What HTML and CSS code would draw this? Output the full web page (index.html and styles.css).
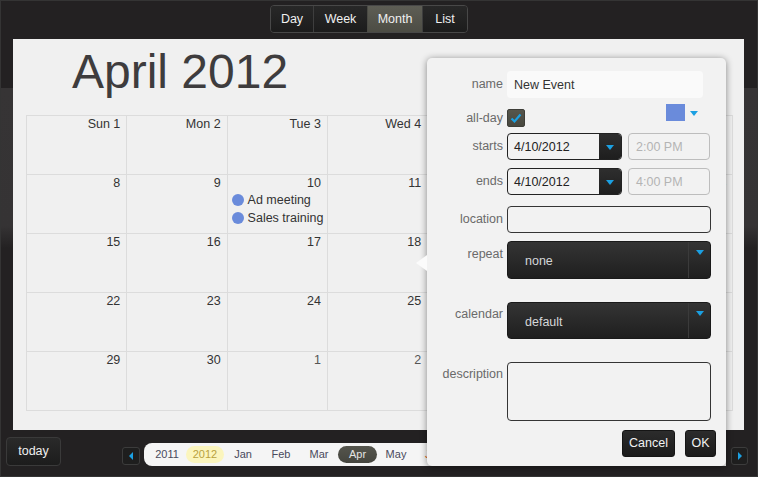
FILE: index.html
```html
<!DOCTYPE html>
<html>
<head>
<meta charset="utf-8">
<link rel="stylesheet" href="styles.css">
</head>
<body>
<div class="app">
  <div class="topbar">
    <div class="tabs">
      <div class="tab t-day">Day</div>
      <div class="tab t-week">Week</div>
      <div class="tab t-month active">Month</div>
      <div class="tab t-list">List</div>
    </div>
  </div>

  <div class="panel">
    <div class="title">April 2012</div>
    <div class="grid">
      <div class="cell"><div class="num">Sun 1</div></div>
      <div class="cell"><div class="num">Mon 2</div></div>
      <div class="cell"><div class="num">Tue 3</div></div>
      <div class="cell"><div class="num">Wed 4</div></div>
      <div class="cell"><div class="num">Thu 5</div></div>
      <div class="cell"><div class="num">Fri 6</div></div>
      <div class="cell"><div class="num">Sat 7</div></div>

      <div class="cell"><div class="num">8</div></div>
      <div class="cell"><div class="num">9</div></div>
      <div class="cell">
        <div class="num">10</div>
        <div class="event"><span class="dot"></span>Ad meeting</div>
        <div class="event"><span class="dot"></span>Sales training</div>
      </div>
      <div class="cell"><div class="num">11</div></div>
      <div class="cell"><div class="num">12</div></div>
      <div class="cell"><div class="num">13</div></div>
      <div class="cell"><div class="num">14</div></div>

      <div class="cell"><div class="num">15</div></div>
      <div class="cell"><div class="num">16</div></div>
      <div class="cell"><div class="num">17</div></div>
      <div class="cell"><div class="num">18</div></div>
      <div class="cell"><div class="num">19</div></div>
      <div class="cell"><div class="num">20</div></div>
      <div class="cell"><div class="num">21</div></div>

      <div class="cell"><div class="num">22</div></div>
      <div class="cell"><div class="num">23</div></div>
      <div class="cell"><div class="num">24</div></div>
      <div class="cell"><div class="num">25</div></div>
      <div class="cell"><div class="num">26</div></div>
      <div class="cell"><div class="num">27</div></div>
      <div class="cell"><div class="num">28</div></div>

      <div class="cell"><div class="num">29</div></div>
      <div class="cell"><div class="num">30</div></div>
      <div class="cell"><div class="num other">1</div></div>
      <div class="cell"><div class="num other">2</div></div>
      <div class="cell"><div class="num other">3</div></div>
      <div class="cell"><div class="num other">4</div></div>
      <div class="cell"><div class="num other">5</div></div>
    </div>
  </div>

  <div class="bottombar">
    <div class="today">today</div>
    <div class="navbtn prev">
      <svg width="6" height="8" viewBox="0 0 6 8"><polygon points="5,0 5,8 1,4" fill="#1ba0e2"/></svg>
    </div>
    <div class="strip">
      <div class="item">2011</div>
      <div class="item year-cur">2012</div>
      <div class="item">Jan</div>
      <div class="item">Feb</div>
      <div class="item">Mar</div>
      <div class="item month-cur">Apr</div>
      <div class="item">May</div>
      <div class="item jun">Jun</div>
    </div>
    <div class="navbtn next">
      <svg width="6" height="8" viewBox="0 0 6 8"><polygon points="1,0 1,8 5,4" fill="#1ba0e2"/></svg>
    </div>
  </div>

  <div class="popup">
    <div class="row r-name">
      <div class="lbl">name</div>
      <div class="field name-field">New Event</div>
    </div>
    <div class="row r-allday">
      <div class="lbl">all-day</div>
      <div class="check">
        <svg width="18" height="18" viewBox="0 0 18 18"><polyline points="4.5,9.5 7.5,12.5 13.5,5.5" fill="none" stroke="#1ba0e2" stroke-width="2.2"/></svg>
      </div>
      <div class="swatch"></div>
      <svg class="swatch-arrow" width="8" height="5" viewBox="0 0 8 5"><polygon points="0,0 8,0 4,5" fill="#1ba0e2"/></svg>
    </div>
    <div class="row r-starts">
      <div class="lbl">starts</div>
      <div class="datesel">
        <div class="dtext">4/10/2012</div>
        <div class="dbtn"><svg width="8" height="5" viewBox="0 0 8 5"><polygon points="0,0 8,0 4,5" fill="#1ba0e2"/></svg></div>
      </div>
      <div class="time">2:00 PM</div>
    </div>
    <div class="row r-ends">
      <div class="lbl">ends</div>
      <div class="datesel">
        <div class="dtext">4/10/2012</div>
        <div class="dbtn"><svg width="8" height="5" viewBox="0 0 8 5"><polygon points="0,0 8,0 4,5" fill="#1ba0e2"/></svg></div>
      </div>
      <div class="time">4:00 PM</div>
    </div>
    <div class="row r-loc">
      <div class="lbl">location</div>
      <div class="field box loc"></div>
    </div>
    <div class="row r-repeat">
      <div class="lbl">repeat</div>
      <div class="select">
        <div class="stext">none</div>
        <div class="sbtn"><svg width="8" height="5" viewBox="0 0 8 5"><polygon points="0,0 8,0 4,5" fill="#1ba0e2"/></svg></div>
      </div>
    </div>
    <div class="row r-cal">
      <div class="lbl">calendar</div>
      <div class="select">
        <div class="stext">default</div>
        <div class="sbtn"><svg width="8" height="5" viewBox="0 0 8 5"><polygon points="0,0 8,0 4,5" fill="#1ba0e2"/></svg></div>
      </div>
    </div>
    <div class="row r-desc">
      <div class="lbl">description</div>
      <div class="field box desc"></div>
    </div>
    <div class="row r-btns">
      <div class="btn cancel">Cancel</div>
      <div class="btn ok">OK</div>
    </div>
  </div>
</div>
</body>
</html>
```

FILE: styles.css
```css
html, body {
  margin: 0;
  padding: 0;
}
body {
  width: 758px;
  height: 477px;
  overflow: hidden;
  font-family: "Liberation Sans", Arial, sans-serif;
  font-size: 12.5px;
  background: linear-gradient(to bottom, #232122 0, #232122 88px, #363435 88px, #353334 226px, #232122 248px, #232122 100%);
}
.app {
  position: relative;
  width: 758px;
  height: 477px;
  box-shadow: inset 0 0 0 1px #343434;
  display: flex;
  flex-direction: column;
}

/* top bar */
.topbar {
  height: 39px;
  display: flex;
  align-items: flex-start;
}
.tabs {
  margin-top: 5px;
  margin-left: 270px;
  display: flex;
  border: 1px solid #484848;
  border-radius: 4px;
  overflow: hidden;
  height: 26px;
}
.tab {
  height: 26px;
  line-height: 27px;
  text-align: center;
  color: #f0f0f0;
  background: linear-gradient(to bottom, #282828, #1c1c1c);
  border-left: 1px solid #3e3e3e;
}
.tab.t-day { width: 42px; border-left: none; }
.tab.t-week { width: 53px; }
.tab.t-month { width: 54px; }
.tab.t-list { width: 44px; }
.tab.active {
  background: linear-gradient(to bottom, #5e5e55, #4c4c44);
  border-left-color: #4a4a44;
}

/* main panel */
.panel {
  height: 391px;
  margin: 0 14px 0 13px;
  background: #f0f0f0;
  box-sizing: border-box;
  padding: 9px 0 0 13px;
}
.title {
  margin-left: 46px;
  font-size: 48px;
  line-height: 48px;
  color: #3e3c3d;
}
.grid {
  margin-top: 19px;
  width: 707px;
  display: grid;
  grid-template-columns: 100.3px 100.3px 100.3px 100.3px 100.3px 100.3px 1fr;
  grid-auto-rows: 59px;
  border-top: 1px solid #dcdcdc;
  border-left: 1px solid #dcdcdc;
  box-sizing: border-box;
}
.cell {
  border-right: 1px solid #dcdcdc;
  border-bottom: 1px solid #dcdcdc;
  box-sizing: border-box;
  padding: 1px 0 0 0;
}
.num {
  text-align: right;
  padding-right: 6px;
  line-height: 15px;
  font-size: 12.5px;
  color: #333;
}
.num.other {
  color: #555;
}
.event {
  display: flex;
  align-items: center;
  height: 18px;
  margin-left: 4px;
  color: #333;
  font-size: 12.5px;
  white-space: nowrap;
}
.event:first-of-type { margin-top: 1px; }
.dot {
  width: 12px;
  height: 12px;
  border-radius: 50%;
  background: #6a8bdb;
  margin-right: 4px;
  flex: none;
}

/* bottom bar */
.bottombar {
  height: 47px;
  display: flex;
  align-items: flex-start;
}
.today {
  margin-top: 7px;
  margin-left: 6px;
  width: 55px;
  height: 29px;
  box-sizing: border-box;
  border: 1px solid #3a3a3a;
  border-radius: 4px;
  background: linear-gradient(to bottom, #2a2a2a, #1c1c1c);
  color: #f0f0f0;
  line-height: 27px;
  text-align: center;
}
.navbtn {
  margin-top: 17px;
  width: 18px;
  height: 18px;
  box-sizing: border-box;
  border: 1px solid #3c3c3c;
  border-radius: 3px;
  background: #1e1e1e;
  display: flex;
  align-items: center;
  justify-content: center;
}
.navbtn.prev { margin-left: 61px; }
.navbtn.next { margin-left: 5px; width: 17px; }
.strip {
  margin-top: 13px;
  margin-left: 4px;
  width: 582px;
  height: 23px;
  box-sizing: border-box;
  background: #f5f5f5;
  border-radius: 8px 0 0 8px;
  padding: 3px 0 0 4px;
  display: flex;
  overflow: hidden;
}
.item {
  flex: none;
  width: 38px;
  height: 17px;
  line-height: 17px;
  text-align: center;
  font-size: 11px;
  color: #4a4a5c;
  border-radius: 9px;
}
.item.year-cur {
  background: #fbf5bd;
  color: #b8a23e;
}
.item.month-cur {
  background: linear-gradient(to bottom, #55554d, #45453e);
  color: #e4e4e4;
  width: 39px;
}
.item.jun {
  color: #e0702a;
  text-align: left;
  padding-left: 10px;
  box-sizing: border-box;
}

/* popup */
.popup {
  position: absolute;
  left: 427px;
  top: 58px;
  width: 299px;
  height: 408px;
  box-sizing: border-box;
  padding-top: 13px;
  background: #f2f2f2;
  border-radius: 5px;
  box-shadow: 0 1px 7px rgba(0, 0, 0, 0.45);
}
.popup::before {
  content: "";
  position: absolute;
  left: -11px;
  top: 197px;
  width: 0;
  height: 0;
  border-top: 8px solid transparent;
  border-bottom: 8px solid transparent;
  border-right: 11px solid #fbfbfb;
}
.row {
  display: flex;
  align-items: flex-start;
}
.lbl {
  width: 76px;
  margin-right: 4px;
  text-align: right;
  padding-top: 5px;
  line-height: 16px;
  color: #6a6a6a;
  flex: none;
}
.r-name { height: 27px; }
.r-allday { height: 23px; margin-top: 6px; }
.r-allday .lbl { padding-top: 6px; }
.r-starts { height: 27px; margin-top: 6px; }
.r-ends { height: 27px; margin-top: 8px; }
.r-loc { height: 27px; margin-top: 11px; }
.r-repeat { height: 38px; margin-top: 8px; }
.r-cal { height: 37px; margin-top: 23px; }
.r-cal .lbl { padding-top: 4px; }
.r-desc { height: 59px; margin-top: 23px; }
.r-desc .lbl { padding-top: 4px; }
.r-btns { height: 27px; margin-top: 9px; justify-content: flex-end; padding-right: 10px; }

.field {
  box-sizing: border-box;
  height: 27px;
  color: #333;
}
.name-field {
  width: 196px;
  background: #fafafa;
  border-radius: 4px;
  padding-left: 7px;
  line-height: 28px;
}
.box {
  width: 204px;
  border: 1px solid #353535;
  border-radius: 4px;
  background: #f2f2f2;
}
.box.desc { height: 59px; }

.check {
  margin-top: 5px;
  width: 18px;
  height: 18px;
  box-sizing: border-box;
  border: 1px solid #3e3e38;
  border-radius: 2px;
  background: linear-gradient(to bottom, #56564c, #48483f);
  position: relative;
}
.check svg {
  position: absolute;
  left: -1px;
  top: -1px;
}
.swatch {
  margin-left: 141px;
  width: 19px;
  height: 17px;
  background: #6a8bdb;
}
.swatch-arrow {
  margin-left: 5px;
  margin-top: 7px;
}

.datesel {
  width: 115px;
  height: 27px;
  box-sizing: border-box;
  border: 1px solid #222;
  border-radius: 4px;
  display: flex;
  overflow: hidden;
  background: #f2f2f2;
}
.dtext {
  flex: 1;
  padding-left: 6px;
  line-height: 26px;
  color: #222;
}
.dbtn {
  width: 22px;
  background: linear-gradient(to bottom, #2e2e2e, #1e1e1e);
  display: flex;
  align-items: center;
  justify-content: center;
  padding-top: 1px;
  box-sizing: border-box;
}
.time {
  margin-left: 6px;
  width: 82px;
  height: 27px;
  box-sizing: border-box;
  border: 1px solid #bdbdbd;
  border-radius: 4px;
  padding-left: 7px;
  line-height: 26px;
  color: #b4b4b4;
}

.select {
  width: 204px;
  height: 100%;
  box-sizing: border-box;
  border: 1px solid #1a1a1a;
  border-radius: 4px;
  background: linear-gradient(to bottom, #343434, #1f1f1f);
  display: flex;
}
.stext {
  flex: 1;
  padding-left: 17px;
  display: flex;
  align-items: center;
  padding-top: 2px;
  color: #d4d6d8;
}
.sbtn {
  width: 22px;
  border-left: 1px solid #3b3b3b;
  display: flex;
  justify-content: center;
  align-items: flex-start;
  padding-top: 8px;
  box-sizing: border-box;
}

.btn {
  height: 27px;
  box-sizing: border-box;
  border: 1px solid #151515;
  border-radius: 3px;
  background: linear-gradient(to bottom, #2c2c2c, #1b1b1b);
  color: #f2f2f2;
  line-height: 25px;
  text-align: center;
}
.btn.cancel { width: 53px; margin-right: 10px; }
.btn.ok { width: 31px; }
```
